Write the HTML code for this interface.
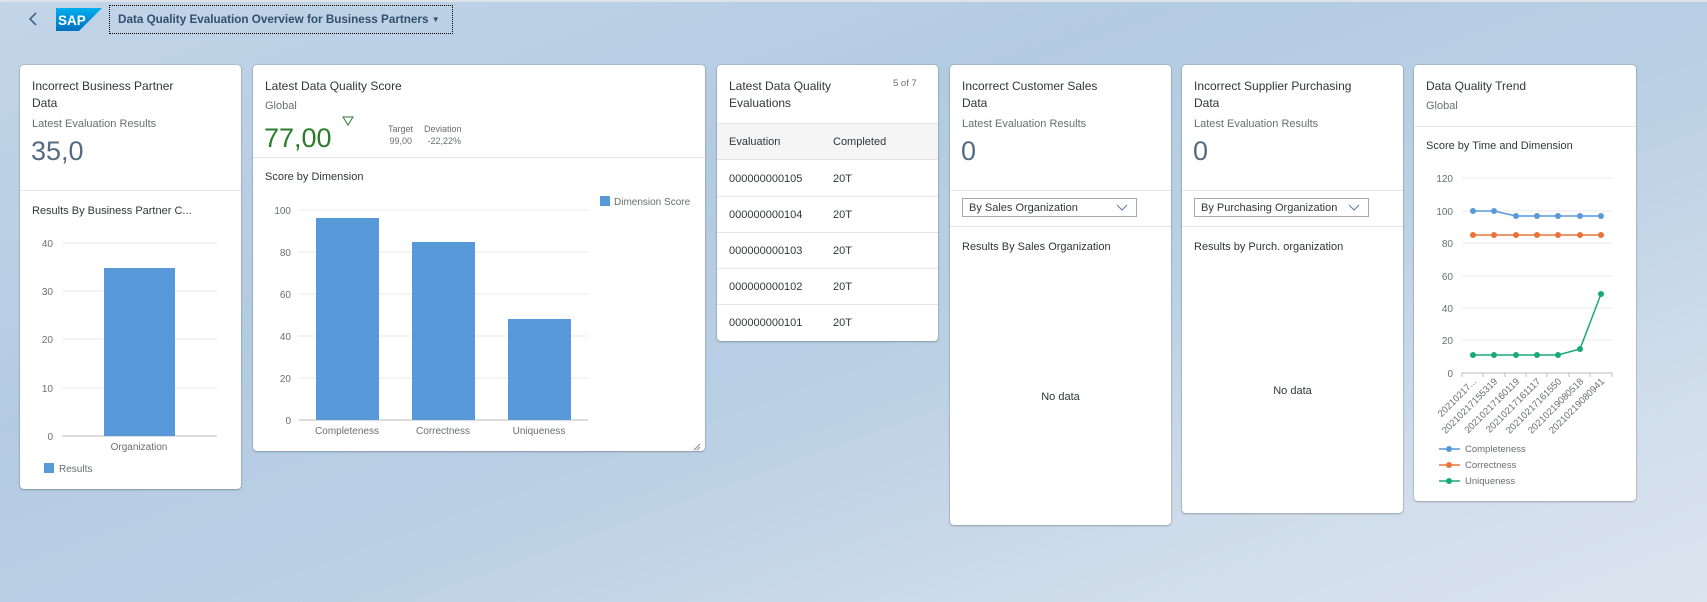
<!DOCTYPE html>
<html><head><meta charset="utf-8"><style>
*{box-sizing:border-box;margin:0;padding:0}
body{width:1707px;height:602px;overflow:hidden;position:relative;font-family:"Liberation Sans",sans-serif;color:#32363a;
background:linear-gradient(160deg,#c3d5e8 0%,#b3cbe2 35%,#b9cfe4 55%,#cfdcea 80%,#dbe5ef 100%);}
.topline{position:absolute;left:0;top:0;width:1707px;height:2px;background:#dde3e9}
.card{position:absolute;background:#fff;border-radius:4px;box-shadow:0 0 0 1px rgba(0,0,0,.08),0 1px 2px rgba(0,0,0,.2);overflow:hidden}
.t{position:absolute;white-space:nowrap}
.sep{position:absolute;left:0;right:0;height:1px;background:#e5e5e5}
.h{font-size:12px;color:#32363a}
.s{font-size:11px;color:#6a6d70}
.big{font-size:27px;color:#556b82}
.r{font-size:11px}
</style></head><body>
<div class="topline"></div>
<svg style="position:absolute;left:26px;top:11px" width="14" height="16"><path d="M10 2 L4 8 L10 14" fill="none" stroke="#40648c" stroke-width="1.6"/></svg>
<svg style="position:absolute;left:56px;top:8px" width="46" height="23"><defs><linearGradient id="sg" x1="0" y1="0" x2="0" y2="1"><stop offset="0" stop-color="#00aeef"/><stop offset="1" stop-color="#0070c0"/></linearGradient></defs><polygon points="0,0 46,0 23,23 0,23" fill="url(#sg)"/><text x="2" y="17" font-family="Liberation Sans" font-weight="bold" font-size="13.5" fill="#fff">SAP</text></svg>
<div style="position:absolute;left:109px;top:5px;width:344px;height:29px;border:1px dotted #000"></div>
<div class="t" style="left:118px;top:13px;font-size:11.7px;font-weight:bold;color:#32506e">Data Quality Evaluation Overview for Business Partners&nbsp;<span style="font-size:8px;position:relative;top:-1px">▼</span></div>

<div class="card" style="left:20px;top:65px;width:221px;height:424px">
<div class="t h" style="left:12px;top:14px">Incorrect Business Partner</div>
<div class="t h" style="left:12px;top:31px">Data</div>
<div class="t s" style="left:12px;top:53px">Latest Evaluation Results</div>
<div class="t big" style="left:11px;top:71px">35,0</div>
<div class="sep" style="top:125px"></div>
<div class="t s" style="left:12px;top:140px;color:#32363a">Results By Business Partner C...</div>
<svg style="position:absolute;left:0;top:0" width="221" height="424">
<g stroke="#e8e8e8"><line x1="42" y1="178" x2="197" y2="178"/><line x1="42" y1="226" x2="197" y2="226"/><line x1="42" y1="274" x2="197" y2="274"/><line x1="42" y1="323" x2="197" y2="323"/></g>
<line x1="42" y1="371" x2="197" y2="371" stroke="#bbb"/>
<g font-family="Liberation Sans" font-size="10" fill="#6a6d70" text-anchor="end"><text x="33" y="182">40</text><text x="33" y="230">30</text><text x="33" y="278">20</text><text x="33" y="327">10</text><text x="33" y="375">0</text></g>
<rect x="84" y="203" width="71" height="168" fill="#5899da"/>
<text x="119" y="385" font-family="Liberation Sans" font-size="10" fill="#6a6d70" text-anchor="middle">Organization</text>
<rect x="24" y="398" width="10" height="10" fill="#5899da"/>
<text x="39" y="407" font-family="Liberation Sans" font-size="10" fill="#6a6d70">Results</text>
</svg>
</div>

<div class="card" style="left:253px;top:65px;width:452px;height:386px">
<div class="t h" style="left:12px;top:14px">Latest Data Quality Score</div>
<div class="t s" style="left:12px;top:35px">Global</div>
<div class="t" style="left:11px;top:58px;font-size:27px;color:#2b7d2b">77,00</div>
<svg style="position:absolute;left:89px;top:51px" width="12" height="10"><polygon points="1,1 11,1 6,9" fill="none" stroke="#2b7d2b" stroke-width="1"/></svg>
<div class="t" style="left:135px;top:59px;font-size:9px;color:#6a6d70">Target</div>
<div class="t" style="left:132px;top:71px;font-size:9px;color:#6a6d70;width:27px;text-align:right">99,00</div>
<div class="t" style="left:171px;top:59px;font-size:9px;color:#6a6d70">Deviation</div>
<div class="t" style="left:171px;top:71px;font-size:9px;color:#6a6d70;width:37px;text-align:right">-22,22%</div>
<div class="sep" style="top:92px"></div>
<div class="t s" style="left:12px;top:106px;color:#32363a">Score by Dimension</div>
<svg style="position:absolute;left:0;top:0" width="452" height="386">
<g stroke="#e8e8e8"><line x1="46" y1="145" x2="335" y2="145"/><line x1="46" y1="187" x2="335" y2="187"/><line x1="46" y1="229" x2="335" y2="229"/><line x1="46" y1="271" x2="335" y2="271"/><line x1="46" y1="313" x2="335" y2="313"/></g>
<line x1="46" y1="355" x2="335" y2="355" stroke="#bbb"/>
<g font-family="Liberation Sans" font-size="10" fill="#6a6d70" text-anchor="end"><text x="38" y="149">100</text><text x="38" y="191">80</text><text x="38" y="233">60</text><text x="38" y="275">40</text><text x="38" y="317">20</text><text x="38" y="359">0</text></g>
<rect x="63" y="153" width="63" height="202" fill="#5899da"/>
<rect x="159" y="177" width="63" height="178" fill="#5899da"/>
<rect x="255" y="254" width="63" height="101" fill="#5899da"/>
<g font-family="Liberation Sans" font-size="10" fill="#6a6d70" text-anchor="middle"><text x="94" y="369">Completeness</text><text x="190" y="369">Correctness</text><text x="286" y="369">Uniqueness</text></g>
<rect x="347" y="131" width="10" height="10" fill="#5899da"/>
<text x="361" y="140" font-family="Liberation Sans" font-size="10" fill="#6a6d70">Dimension Score</text>
<path d="M447 379 L441 385 M447 382 L444 385" stroke="#888" stroke-width="1"/>
</svg>
</div>

<div class="card" style="left:717px;top:65px;width:221px;height:276px">
<div class="t h" style="left:12px;top:14px">Latest Data Quality</div>
<div class="t h" style="left:12px;top:31px">Evaluations</div>
<div class="t" style="left:176px;top:13px;font-size:9.5px;color:#6a6d70">5 of 7</div>
<div style="position:absolute;left:0;top:58px;width:221px;height:37px;background:#f5f5f5;border-top:1px solid #e5e5e5;border-bottom:1px solid #e0e0e0"></div>
<div class="t r" style="left:12px;top:71px">Evaluation</div>
<div class="t r" style="left:116px;top:71px">Completed</div>
<div style="position:absolute;left:0;top:131px;width:221px;height:1px;background:#e5e5e5"></div>
<div style="position:absolute;left:0;top:167px;width:221px;height:1px;background:#e5e5e5"></div>
<div style="position:absolute;left:0;top:203px;width:221px;height:1px;background:#e5e5e5"></div>
<div style="position:absolute;left:0;top:239px;width:221px;height:1px;background:#e5e5e5"></div>
<div class="t r" style="left:12px;top:108px">000000000105</div><div class="t r" style="left:116px;top:108px">20T</div>
<div class="t r" style="left:12px;top:144px">000000000104</div><div class="t r" style="left:116px;top:144px">20T</div>
<div class="t r" style="left:12px;top:180px">000000000103</div><div class="t r" style="left:116px;top:180px">20T</div>
<div class="t r" style="left:12px;top:216px">000000000102</div><div class="t r" style="left:116px;top:216px">20T</div>
<div class="t r" style="left:12px;top:252px">000000000101</div><div class="t r" style="left:116px;top:252px">20T</div>
</div>

<div class="card" style="left:950px;top:65px;width:221px;height:460px">
<div class="t h" style="left:12px;top:14px">Incorrect Customer Sales</div>
<div class="t h" style="left:12px;top:31px">Data</div>
<div class="t s" style="left:12px;top:53px">Latest Evaluation Results</div>
<div class="t big" style="left:11px;top:71px">0</div>
<div class="sep" style="top:125px"></div>
<div style="position:absolute;left:12px;top:133px;width:175px;height:19px;border:1px solid #a9a9a9"></div>
<div class="t r" style="left:19px;top:137px">By Sales Organization</div>
<svg style="position:absolute;left:166px;top:139px" width="12" height="8"><path d="M1 1 L6 6 L11 1" fill="none" stroke="#5a7da8" stroke-width="1"/></svg>
<div class="sep" style="top:161px"></div>
<div class="t s" style="left:12px;top:176px;color:#32363a">Results By Sales Organization</div>
<div class="t r" style="left:0;width:221px;text-align:center;top:326px">No data</div>
</div>

<div class="card" style="left:1182px;top:65px;width:221px;height:448px">
<div class="t h" style="left:12px;top:14px">Incorrect Supplier Purchasing</div>
<div class="t h" style="left:12px;top:31px">Data</div>
<div class="t s" style="left:12px;top:53px">Latest Evaluation Results</div>
<div class="t big" style="left:11px;top:71px">0</div>
<div class="sep" style="top:125px"></div>
<div style="position:absolute;left:12px;top:133px;width:175px;height:19px;border:1px solid #a9a9a9"></div>
<div class="t r" style="left:19px;top:137px">By Purchasing Organization</div>
<svg style="position:absolute;left:166px;top:139px" width="12" height="8"><path d="M1 1 L6 6 L11 1" fill="none" stroke="#5a7da8" stroke-width="1"/></svg>
<div class="sep" style="top:161px"></div>
<div class="t s" style="left:12px;top:176px;color:#32363a">Results by Purch. organization</div>
<div class="t r" style="left:0;width:221px;text-align:center;top:320px">No data</div>
</div>

<div class="card" style="left:1414px;top:65px;width:222px;height:436px">
<div class="t h" style="left:12px;top:14px">Data Quality Trend</div>
<div class="t s" style="left:12px;top:35px">Global</div>
<div class="sep" style="top:61px"></div>
<div class="t s" style="left:12px;top:75px;color:#32363a">Score by Time and Dimension</div>
<svg style="position:absolute;left:-1414px;top:-65px" width="1707" height="602">
<g stroke="#e8e8e8"><line x1="1462" y1="178" x2="1612" y2="178"/><line x1="1462" y1="211" x2="1612" y2="211"/><line x1="1462" y1="243" x2="1612" y2="243"/><line x1="1462" y1="276" x2="1612" y2="276"/><line x1="1462" y1="308" x2="1612" y2="308"/><line x1="1462" y1="340" x2="1612" y2="340"/></g>
<line x1="1462" y1="373" x2="1612" y2="373" stroke="#bbb"/>
<g stroke="#bbb"><line x1="1462" y1="373" x2="1462" y2="377"/><line x1="1483" y1="373" x2="1483" y2="377"/><line x1="1505" y1="373" x2="1505" y2="377"/><line x1="1526" y1="373" x2="1526" y2="377"/><line x1="1547" y1="373" x2="1547" y2="377"/><line x1="1569" y1="373" x2="1569" y2="377"/><line x1="1590" y1="373" x2="1590" y2="377"/><line x1="1612" y1="373" x2="1612" y2="377"/></g>
<g font-family="Liberation Sans" font-size="10" fill="#6a6d70" text-anchor="end"><text x="1453" y="182">120</text><text x="1453" y="215">100</text><text x="1453" y="247">80</text><text x="1453" y="280">60</text><text x="1453" y="312">40</text><text x="1453" y="344">20</text><text x="1453" y="377">0</text></g>
<g fill="none" stroke-width="1.5">
<polyline stroke="#5899da" points="1473,211 1494,211 1516,216 1537,216 1558,216 1580,216 1601,216"/>
<polyline stroke="#e8743b" points="1473,235 1494,235 1516,235 1537,235 1558,235 1580,235 1601,235"/>
<polyline stroke="#19a979" points="1473,355 1494,355 1516,355 1537,355 1558,355 1580,349 1601,294"/>
</g>
<g fill="#5899da"><circle cx="1473" cy="211" r="3"/><circle cx="1494" cy="211" r="3"/><circle cx="1516" cy="216" r="3"/><circle cx="1537" cy="216" r="3"/><circle cx="1558" cy="216" r="3"/><circle cx="1580" cy="216" r="3"/><circle cx="1601" cy="216" r="3"/></g>
<g fill="#e8743b"><circle cx="1473" cy="235" r="3"/><circle cx="1494" cy="235" r="3"/><circle cx="1516" cy="235" r="3"/><circle cx="1537" cy="235" r="3"/><circle cx="1558" cy="235" r="3"/><circle cx="1580" cy="235" r="3"/><circle cx="1601" cy="235" r="3"/></g>
<g fill="#19a979"><circle cx="1473" cy="355" r="3"/><circle cx="1494" cy="355" r="3"/><circle cx="1516" cy="355" r="3"/><circle cx="1537" cy="355" r="3"/><circle cx="1558" cy="355" r="3"/><circle cx="1580" cy="349" r="3"/><circle cx="1601" cy="294" r="3"/></g>
<g font-family="Liberation Sans" font-size="9.5" fill="#6a6d70" text-anchor="end">
<text transform="translate(1477,382) rotate(-45)">20210217...</text>
<text transform="translate(1498,382) rotate(-45)">20210217155319</text>
<text transform="translate(1520,382) rotate(-45)">20210217160119</text>
<text transform="translate(1541,382) rotate(-45)">20210217161117</text>
<text transform="translate(1562,382) rotate(-45)">20210217161550</text>
<text transform="translate(1584,382) rotate(-45)">20210219080518</text>
<text transform="translate(1605,382) rotate(-45)">20210219080941</text>
</g>
<g stroke-width="1.5"><line x1="1439" y1="449" x2="1460" y2="449" stroke="#5899da"/><line x1="1439" y1="465" x2="1460" y2="465" stroke="#e8743b"/><line x1="1439" y1="481" x2="1460" y2="481" stroke="#19a979"/></g>
<circle cx="1449" cy="449" r="3" fill="#5899da"/><circle cx="1449" cy="465" r="3" fill="#e8743b"/><circle cx="1449" cy="481" r="3" fill="#19a979"/>
<g font-family="Liberation Sans" font-size="9.5" fill="#6a6d70"><text x="1465" y="452">Completeness</text><text x="1465" y="468">Correctness</text><text x="1465" y="484">Uniqueness</text></g>
</svg>
</div>
</body></html>
